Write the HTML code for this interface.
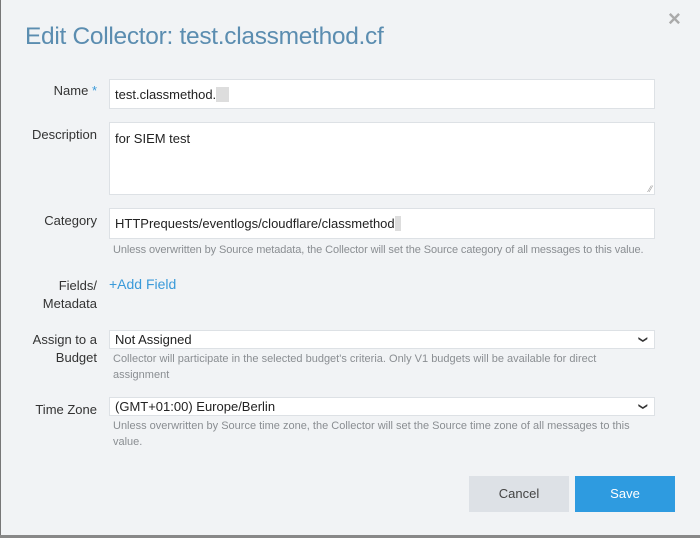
<!DOCTYPE html>
<html><head><style>
body{margin:0;width:700px;height:538px;background:#f1f3f5;position:relative;overflow:hidden;font-family:"Liberation Sans",sans-serif;color:#333}
.a{position:absolute}
.lbl{position:absolute;right:603px;font-size:13px;color:#333;text-align:right;white-space:nowrap}
.in{position:absolute;left:109px;width:546px;background:#fff;border:1px solid #dde1e5;box-sizing:border-box;font-size:13px;padding-left:5px;color:#222}
.help{position:absolute;left:113px;font-size:11px;color:#8a8e92;line-height:16px}
.chev{position:absolute;left:639px;font-size:9px;line-height:19px;transform:rotate(90deg);color:#333}
</style></head><body>
<div class="a" style="left:0;top:0;width:1px;height:538px;background:#777"></div>
<div class="a" style="left:0;top:535px;width:700px;height:3px;background:#888"></div>
<div class="a" style="left:668px;top:6px;font-size:22px;color:#aaa;font-weight:bold">×</div>
<div class="a" style="left:25px;top:23px;font-size:24.5px;color:#5b8db0;letter-spacing:-0.3px">Edit Collector: test.classmethod.cf</div>

<div class="lbl" style="top:83px">Name <span style="color:#3a9ad9">*</span></div>
<div class="in" style="top:79px;height:30px;line-height:29px">test.classmethod.<span style="background:#ddd;color:#ddd">xx</span></div>

<div class="lbl" style="top:127px">Description</div>
<div class="in" style="top:122px;height:73px;padding-top:8px">for SIEM test<span style="position:absolute;right:2px;bottom:0;font-size:9px;color:#999">⁄⁄</span></div>

<div class="lbl" style="top:213px">Category</div>
<div class="in" style="top:208px;height:31px;line-height:29px">HTTPrequests/eventlogs/cloudflare/classmethod<span style="background:#ddd;color:#ddd">x</span></div>
<div class="help" style="top:242px;white-space:nowrap;letter-spacing:-0.1px">Unless overwritten by Source metadata, the Collector will set the Source category of all messages to this value.</div>

<div class="lbl" style="top:277px;line-height:18px">Fields/<br>Metadata</div>
<div class="a" style="left:109px;top:276px;font-size:14px;color:#3a9ad9">+Add Field</div>

<div class="lbl" style="top:331px;line-height:18px">Assign to a<br>Budget</div>
<div class="in" style="top:330px;height:19px;line-height:18px">Not Assigned</div>
<div class="chev" style="top:330px">&#10095;</div>
<div class="help" style="top:351px;width:495px">Collector will participate in the selected budget's criteria. Only V1 budgets will be available for direct assignment</div>

<div class="lbl" style="top:402px">Time Zone</div>
<div class="in" style="top:397px;height:19px;line-height:18px">(GMT+01:00) Europe/Berlin</div>
<div class="chev" style="top:397px">&#10095;</div>
<div class="help" style="top:418px;width:525px">Unless overwritten by Source time zone, the Collector will set the Source time zone of all messages to this value.</div>

<div class="a" style="left:469px;top:476px;width:100px;height:36px;background:#dde1e6;font-size:13px;color:#444;text-align:center;line-height:36px">Cancel</div>
<div class="a" style="left:575px;top:476px;width:100px;height:36px;background:#2e9be0;font-size:13px;color:#fff;text-align:center;line-height:36px">Save</div>
</body></html>
